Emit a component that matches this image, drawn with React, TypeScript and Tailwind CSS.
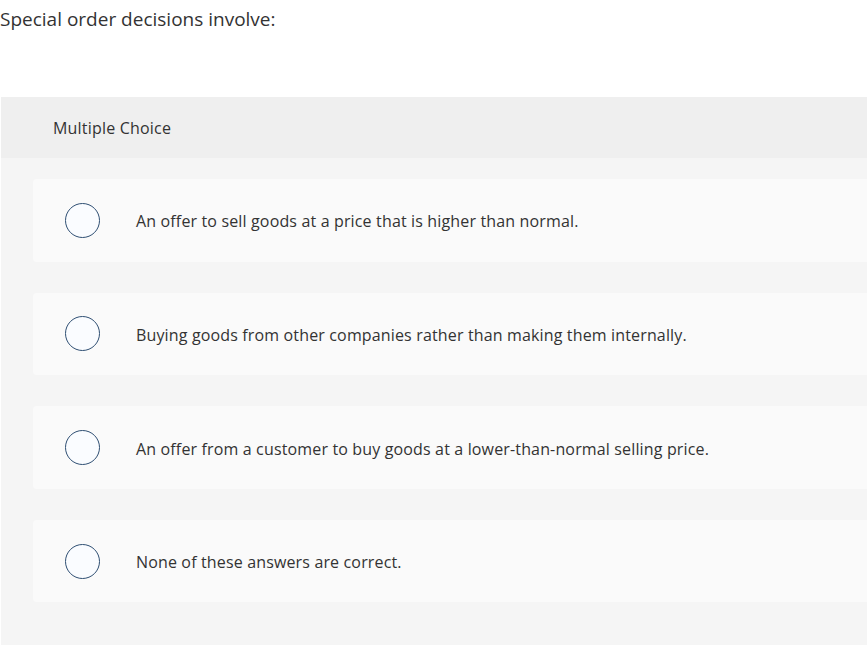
import React from "react";

const options = [
  "An offer to sell goods at a price that is higher than normal.",
  "Buying goods from other companies rather than making them internally.",
  "An offer from a customer to buy goods at a lower-than-normal selling price.",
  "None of these answers are correct.",
];

export default function App() {
  return (
    <div
      className="w-[867px] h-[645px] bg-white overflow-hidden text-[#333333]"
      style={{ fontFamily: "'Open Sans', sans-serif" }}
    >
      <div className="h-[97px] pt-[6px]">
        <p className="text-[19px] leading-[26px]">Special order decisions involve:</p>
      </div>
      <div className="ml-[1px] bg-[#f5f5f5] h-[548px]">
        <div className="h-[61px] bg-[#efefef] flex items-center pl-[52px]">
          <span className="text-[16px] tracking-[0.2px] text-[#333]">Multiple Choice</span>
        </div>
        <div className="pt-[21px] pl-[32px] flex flex-col gap-[31.17px]">
          {options.map((o) => (
            <div
              key={o}
              className="h-[82.5px] bg-[#fafafa] rounded-l-[4px] flex items-center"
            >
              <div className="ml-[32px] w-[35px] h-[35px] rounded-full border-[1.5px] border-[#2f4f73] bg-[#fafcff]" />
              <span className="ml-[36px] pt-[2px] text-[16px] tracking-[0.15px] text-[#333]">{o}</span>
            </div>
          ))}
        </div>
      </div>
    </div>
  );
}
